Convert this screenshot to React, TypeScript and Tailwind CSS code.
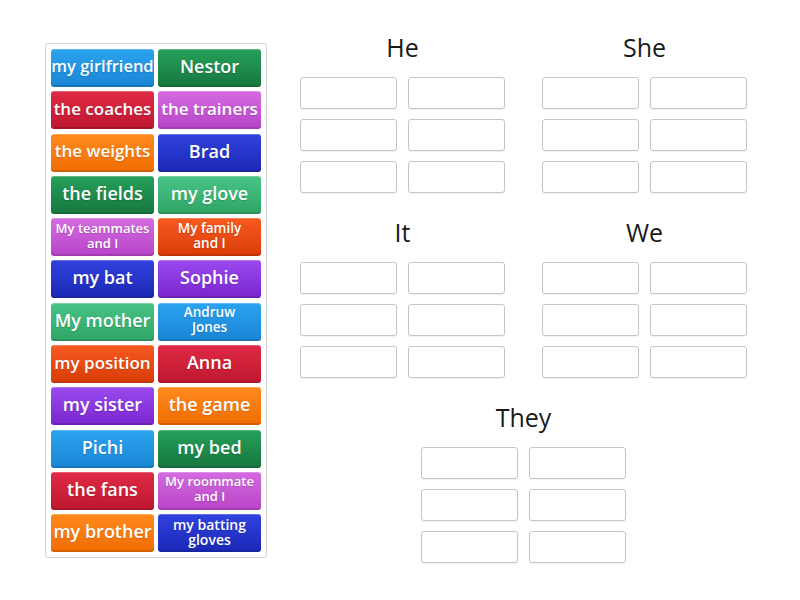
const COLORS = {
  blue: "from-[#2ba3ef] to-[#1985d5]",
  green: "from-[#26a05a] to-[#16773e]",
  red: "from-[#e02a45] to-[#bd172f]",
  pink: "from-[#d46ae0] to-[#b844c8]",
  orange: "from-[#ff8a1c] to-[#f06c00]",
  navy: "from-[#3142de] to-[#1b28b6]",
  mint: "from-[#48c486] to-[#2fa566]",
  rust: "from-[#f65a1f] to-[#da3b06]",
  purple: "from-[#9949ee] to-[#7a24d0]",
};

type Tile = { text: string; color: keyof typeof COLORS; size: string };

const TILES: Tile[] = [
  { text: "my girlfriend", color: "blue", size: "text-[16.5px]" },
  { text: "Nestor", color: "green", size: "text-[18px]" },
  { text: "the coaches", color: "red", size: "text-[17px]" },
  { text: "the trainers", color: "pink", size: "text-[17px]" },
  { text: "the weights", color: "orange", size: "text-[17px]" },
  { text: "Brad", color: "navy", size: "text-[18px]" },
  { text: "the fields", color: "green", size: "text-[18px]" },
  { text: "my glove", color: "mint", size: "text-[18px]" },
  { text: "My teammates and I", color: "pink", size: "text-[13px] leading-[15px]" },
  { text: "My family and I", color: "rust", size: "text-[13.5px] leading-[15px] px-4" },
  { text: "my bat", color: "navy", size: "text-[18px]" },
  { text: "Sophie", color: "purple", size: "text-[18px]" },
  { text: "My mother", color: "mint", size: "text-[18px]" },
  { text: "Andruw Jones", color: "blue", size: "text-[13.5px] leading-[15px] px-5" },
  { text: "my position", color: "rust", size: "text-[17px]" },
  { text: "Anna", color: "red", size: "text-[18px]" },
  { text: "my sister", color: "purple", size: "text-[18px]" },
  { text: "the game", color: "orange", size: "text-[18px]" },
  { text: "Pichi", color: "blue", size: "text-[18px]" },
  { text: "my bed", color: "green", size: "text-[18px]" },
  { text: "the fans", color: "red", size: "text-[18px]" },
  { text: "My roommate and I", color: "pink", size: "text-[13px] leading-[15px]" },
  { text: "my brother", color: "orange", size: "text-[18px]" },
  { text: "my batting gloves", color: "navy", size: "text-[14px] leading-[15px] px-3" },
];

function DropGroup({ title }: { title: string }) {
  return (
    <div className="flex flex-col items-center w-[205px]">
      <div className="text-[25px] leading-[34px] text-[#1a1a1a]">{title}</div>
      <div className="mt-[13px] grid grid-cols-2 gap-x-[11px] gap-y-[10px]">
        {Array.from({ length: 6 }).map((_, i) => (
          <div
            key={i}
            className="w-[97px] h-[32px] bg-white border border-[#c6c6c6] rounded-[3px] shadow-[0_1px_1px_rgba(0,0,0,0.06)]"
          />
        ))}
      </div>
    </div>
  );
}

export default function App() {
  return (
    <div className="w-[800px] h-[600px] bg-white flex font-['Open_Sans',sans-serif]">
      <div className="pl-[45px] pt-[43px]">
        <div className="w-[222px] p-[5px] bg-white border border-[#d2d2d2] rounded-[3px] grid grid-cols-2 gap-x-[4px] gap-y-[4.3px]">
          {TILES.map((t) => (
            <div
              key={t.text}
              className={`h-[38px] pb-[3px] rounded-[3px] bg-linear-to-b ${COLORS[t.color]} shadow-[inset_0_1px_0_rgba(255,255,255,0.25),inset_0_-2px_0_rgba(0,0,0,0.12)] flex items-center justify-center text-center text-white font-semibold ${t.size}`}
            >
              <span className="[text-shadow:0_1px_1px_rgba(0,0,0,0.15)]">{t.text}</span>
            </div>
          ))}
        </div>
      </div>
      <div className="ml-[33px] pt-[30px] flex flex-col items-center gap-y-[22px]">
        <div className="flex gap-x-[37px]">
          <DropGroup title="He" />
          <DropGroup title="She" />
        </div>
        <div className="flex gap-x-[37px]">
          <DropGroup title="It" />
          <DropGroup title="We" />
        </div>
        <DropGroup title="They" />
      </div>
    </div>
  );
}
